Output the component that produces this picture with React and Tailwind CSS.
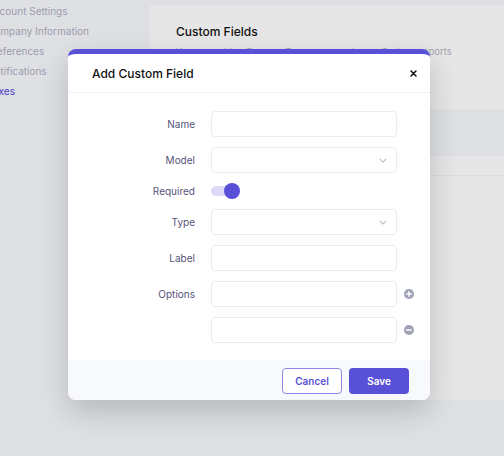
import { useState } from 'react';

const FONT = { fontFamily: 'Inter, "Noto Sans", sans-serif' };

function Chevron() {
  return (
    <svg viewBox="0 0 10 6" className="h-[5px] w-[8px]" fill="none" stroke="#b4b6c8" strokeWidth="1.3">
      <path d="M1 1l4 4 4-4" />
    </svg>
  );
}

function CircleIcon({ minus }) {
  return (
    <svg viewBox="0 0 20 20" className="h-[10px] w-[10px]">
      <circle cx="10" cy="10" r="10" fill="#9fa2b4" />
      <path d="M5.5 10h9" stroke="#fff" strokeWidth="3" strokeLinecap="round" />
      {!minus && <path d="M10 5.5v9" stroke="#fff" strokeWidth="3" strokeLinecap="round" />}
    </svg>
  );
}

function Fila({ label, children, icono, alto = 'h-[26px]' }) {
  return (
    <div className={`flex items-center ${alto}`}>
      <div className="w-[103px] shrink-0 text-right text-[10px] text-[#55547a]">{label}</div>
      <div className="ml-4 w-[186px] shrink-0 h-full flex items-center">{children}</div>
      {icono && <div className="ml-[7px] shrink-0 flex items-center">{icono}</div>}
    </div>
  );
}

function Campo({ select }) {
  return (
    <div className="w-full h-full rounded-[4px] border border-[#ebebf7] bg-white flex items-center justify-end pr-[9px]">
      {select && <Chevron />}
    </div>
  );
}

export default function App() {
  const [requerido, setRequerido] = useState(true);

  return (
    <div style={FONT} className="relative w-[504px] h-[456px] overflow-hidden bg-[#dfe0e4]">
      <div className="flex">
        <div className="w-[150px] shrink-0 -ml-[13px] pt-[1px] flex flex-col text-[10px] text-[#9c9dac]">
          <div className="h-[20px] leading-[20px] whitespace-nowrap">Account Settings</div>
          <div className="h-[20px] leading-[20px] whitespace-nowrap">Company Information</div>
          <div className="h-[20px] leading-[20px] whitespace-nowrap">Preferences</div>
          <div className="h-[20px] leading-[20px] whitespace-nowrap">Notifications</div>
          <div className="h-[20px] leading-[20px] whitespace-nowrap text-[#5a53c9] font-medium">Taxes</div>
        </div>
        <div className="mt-[5px] ml-[13px] w-[400px] h-[395px] bg-[#e6e6e7] flex flex-col">
          <div className="px-[26px] pt-[19px] shrink-0">
            <div className="text-[12px] leading-[16px] font-medium text-[#111]">Custom Fields</div>
            <div className="mt-[6px] text-[9.5px] leading-[12px] whitespace-nowrap text-[#a3a4ad]">
              You can add or Remove Taxes as you please. Crater supports
            </div>
          </div>
          <div className="mt-[51px] h-[47px] shrink-0 bg-[#dfe0e4]" />
          <div className="mt-[19px] h-px shrink-0 bg-[#dcdce2]" />
        </div>
      </div>

      <div className="absolute left-[68px] top-[49px] w-[362px] rounded-[8px] overflow-hidden bg-white border-t-[5px] border-[#5851d8] shadow-[0_12px_30px_rgba(0,0,0,0.18)]">
        <div className="h-[39px] pl-6 pr-[13px] flex items-center justify-between border-b border-[#f0f0f6]">
          <div className="text-[12px] font-medium text-[#111] pt-[2px]">Add Custom Field</div>
          <svg viewBox="0 0 10 10" className="h-[7px] w-[7px]" stroke="#111" strokeWidth="2.2" strokeLinecap="round">
            <path d="M1.5 1.5l7 7M8.5 1.5l-7 7" />
          </svg>
        </div>

        <div className="px-6 pt-[18px] pb-[17px] flex flex-col gap-[10px]">
          <Fila label="Name"><Campo /></Fila>
          <Fila label="Model"><Campo select /></Fila>
          <Fila label="Required" alto="h-[16px]">
            <button
              onClick={() => setRequerido(!requerido)}
              className="relative w-[30px] h-[16px] flex items-center"
            >
              <span className="absolute left-0 top-[3px] w-[28px] h-[10px] rounded-full bg-[#dcdaf6]" />
              <span className={`absolute top-0 w-[16px] h-[16px] rounded-full bg-[#5851d8] ${requerido ? 'left-[13px]' : 'left-0'}`} />
            </button>
          </Fila>
          <Fila label="Type"><Campo select /></Fila>
          <Fila label="Label"><Campo /></Fila>
          <Fila label="Options" icono={<CircleIcon />}><Campo /></Fila>
          <Fila label="" icono={<CircleIcon minus />}><Campo /></Fila>
        </div>

        <div className="h-[40px] bg-[#f8f9fd] flex items-start justify-end gap-[7px] pt-[8px] pr-[21px]">
          <button className="w-[60px] h-[26px] rounded-[4px] border border-[#8c87e6] bg-white text-[10px] font-semibold text-[#5851d8]">
            Cancel
          </button>
          <button className="w-[60px] h-[26px] rounded-[4px] bg-[#5851d8] text-[10px] font-semibold text-white">
            Save
          </button>
        </div>
      </div>
    </div>
  );
}
